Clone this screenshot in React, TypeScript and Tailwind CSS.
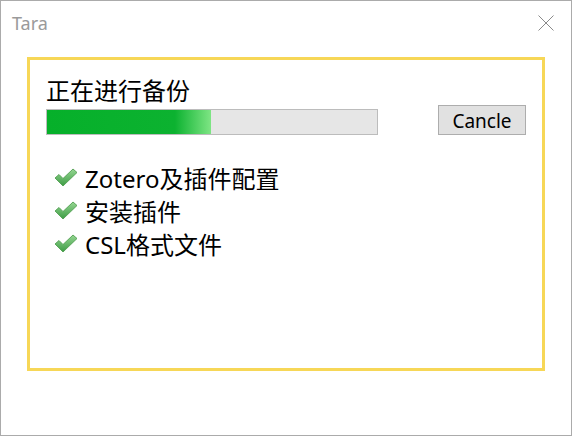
import React from 'react';

const steps = ['Zotero及插件配置', '安装插件', 'CSL格式文件'];

const CheckMark: React.FC = () => (
  <svg width="24" height="19" viewBox="0 0 24 19" className="shrink-0 -mt-[3px]">
    <defs>
      <linearGradient id="chk" x1="0" y1="0" x2="0" y2="1">
        <stop offset="0" stopColor="#95d692" />
        <stop offset="1" stopColor="#3d9c44" />
      </linearGradient>
    </defs>
    <path
      d="M1 10 L5 6.5 L9 10.5 L19 1 L23 4.5 L9 18 Z"
      fill="url(#chk)"
      stroke="#519f51"
      strokeWidth="0.9"
      strokeLinejoin="round"
    />
  </svg>
);

const App: React.FC = () => {
  return (
    <div
      className="w-[572px] h-[436px] bg-white border border-[#ababab] flex flex-col overflow-hidden"
      style={{ fontFamily: '"Noto Sans", "Noto Sans CJK SC", sans-serif' }}
    >
      <div className="h-[56px] flex items-start justify-between shrink-0">
        <span className="ml-[11px] mt-[9px] text-[18px] leading-[26px] text-[#9a9a9a]">Tara</span>
        <svg width="16" height="16" viewBox="0 0 16 16" className="mt-[14px] mr-[17px]">
          <path d="M0.5 0.5 L15.5 15.5 M15.5 0.5 L0.5 15.5" stroke="#8a8a8a" strokeWidth="1" />
        </svg>
      </div>

      <div className="ml-[26px] w-[518px] h-[314px] border-[3px] border-[#f7d757] pt-[17px] pl-[16px] pr-[16px]">
        <div className="text-[24px] leading-[28px] text-black">正在进行备份</div>

        <div className="flex items-start justify-between">
          <div className="mt-[4px] w-[332px] h-[26px] bg-[#e6e6e6] border border-[#bcbcbc]">
            <div className="h-full w-[164px] bg-[linear-gradient(to_right,#06b02a_0%,#0cb230_78%,#7ee584_100%)]" />
          </div>
          <button className="w-[88px] h-[30px] bg-[#e1e1e1] border border-[#adadad] pt-[2px] text-[19px] leading-[26px] text-black">
            Cancle
          </button>
        </div>

        <div className="mt-[27px] pl-[8px] flex flex-col">
          {steps.map((s) => (
            <div key={s} className="flex items-center h-[33px]">
              <CheckMark />
              <span className="ml-[7px] text-[24px] leading-[33px] text-black">{s}</span>
            </div>
          ))}
        </div>
      </div>
    </div>
  );
};

export default App;
